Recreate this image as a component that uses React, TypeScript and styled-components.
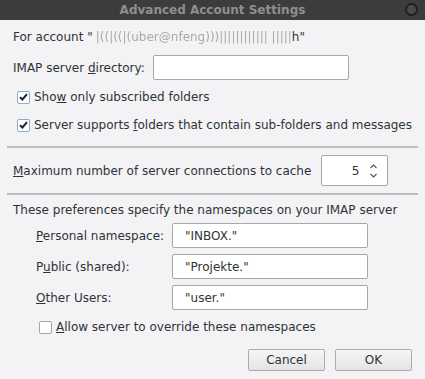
import React from "react";
import styled, { createGlobalStyle } from "styled-components";

const GlobalStyle = createGlobalStyle`
  html, body {
    margin: 0;
    padding: 0;
    background: #f3f3f5;
  }
  body {
    font-family: "DejaVu Sans", "Liberation Sans", sans-serif;
    font-size: 12px;
    color: #2e3436;
  }
`;

const Window = styled.div`
  width: 425px;
  height: 379px;
  display: flex;
  flex-direction: column;
  background: #f3f3f5;
  overflow: hidden;
`;

const TitleBar = styled.div`
  position: relative;
  height: 20px;
  flex-shrink: 0;
  display: flex;
  align-items: center;
  justify-content: center;
  background: #3c3c3c;
  color: #8f8f8f;
  font-weight: bold;
  font-size: 12px;
`;

const CloseDot = styled.div`
  position: absolute;
  right: 7px;
  top: 3px;
  width: 9px;
  height: 9px;
  border: 2px solid #1f1f1f;
  border-radius: 50%;
  background: #4a4a4a;
`;

const Body = styled.div`
  display: flex;
  flex-direction: column;
  padding: 4px 13px 0 13px;
`;

const Row = styled.div<{ $h: number; $mt?: number; $indent?: number }>`
  display: flex;
  align-items: center;
  height: ${(p) => p.$h}px;
  margin-top: ${(p) => p.$mt ?? 0}px;
  padding-left: ${(p) => p.$indent ?? 0}px;
  white-space: nowrap;
`;

const Blurred = styled.span`
  margin-left: 3px;
  color: #a9a9a9;
  filter: blur(0.5px);
`;

const U = styled.span`
  text-decoration: underline;
`;

const Label = styled.span<{ $w?: number }>`
  display: inline-block;
  width: ${(p) => (p.$w ? `${p.$w}px` : "auto")};
`;

const TextBox = styled.div<{ $w: number }>`
  box-sizing: border-box;
  width: ${(p) => p.$w}px;
  height: 25px;
  background: #fff;
  border: 1px solid #a7a7a7;
  border-radius: 2px;
  display: flex;
  align-items: center;
  padding-left: 12px;
`;

const CheckBox = styled.span<{ $checked?: boolean }>`
  box-sizing: border-box;
  width: 13px;
  height: 13px;
  margin: 0 4px 0 4px;
  border: 1px solid ${(p) => (p.$checked ? "#8fa7d3" : "#a5a5a5")};
  border-radius: 2px;
  background: #fff;
  display: inline-flex;
  align-items: center;
  justify-content: center;
`;

const Separator = styled.div<{ $mt: number }>`
  height: 2px;
  margin: ${(p) => p.$mt}px -6px 0 -6px;
  background: #bdbdbd;
`;

const Spin = styled.div`
  box-sizing: border-box;
  margin-left: 10px;
  width: 67px;
  height: 31px;
  background: #fff;
  border: 1px solid #a7a7a7;
  border-radius: 2px;
  display: flex;
  align-items: center;
  justify-content: flex-end;
  padding-right: 10px;
  gap: 11px;
`;

const Arrows = styled.div`
  display: flex;
  flex-direction: column;
  gap: 4px;
`;

const ButtonRow = styled.div`
  display: flex;
  justify-content: flex-end;
  gap: 10px;
  margin-top: 12px;
`;

const Button = styled.div`
  box-sizing: border-box;
  width: 77px;
  height: 22px;
  display: flex;
  align-items: center;
  justify-content: center;
  border: 1px solid #acacac;
  border-radius: 2px;
  background: linear-gradient(#f6f6f6, #e4e4e4);
  color: #2e3436;
`;

const Check = () => (
  <svg width="9" height="8" viewBox="0 0 9 8">
    <path d="M1 4.2 L3.4 6.5 L8 1.2" fill="none" stroke="#222" strokeWidth="2" />
  </svg>
);

const Chevron = ({ up }: { up?: boolean }) => (
  <svg width="7" height="5" viewBox="0 0 7 5">
    <path
      d={up ? "M0.5 4 L3.5 1 L6.5 4" : "M0.5 1 L3.5 4 L6.5 1"}
      fill="none"
      stroke="#555"
      strokeWidth="1.1"
    />
  </svg>
);

const namespaces = [
  { label: <><U>P</U>ersonal namespace:</>, value: "\"INBOX.\"" },
  { label: <>P<U>u</U>blic (shared):</>, value: "\"Projekte.\"" },
  { label: <><U>O</U>ther Users:</>, value: "\"user.\"" },
];

export default function App() {
  return (
    <Window>
      <GlobalStyle />
      <TitleBar>
        Advanced Account Settings
        <CloseDot />
      </TitleBar>
      <Body>
        <Row $h={26}>
          <Label>
            For account "<Blurred>|((|((|(uber@nfeng)))|||||||||||| |||||</Blurred>h"
          </Label>
        </Row>
        <Row $h={25} $mt={5}>
          <Label $w={140}>
            IMAP server <U>d</U>irectory:
          </Label>
          <TextBox $w={196} />
        </Row>
        <Row $h={28} $mt={3}>
          <CheckBox $checked>
            <Check />
          </CheckBox>
          <Label>
            Sho<U>w</U> only subscribed folders
          </Label>
        </Row>
        <Row $h={28}>
          <CheckBox $checked>
            <Check />
          </CheckBox>
          <Label>
            Server supports <U>f</U>olders that contain sub-folders and messages
          </Label>
        </Row>
        <Separator $mt={7} />
        <Row $h={31} $mt={7}>
          <Label>
            <U>M</U>aximum number of server connections to cache
          </Label>
          <Spin>
            5
            <Arrows>
              <Chevron up />
              <Chevron />
            </Arrows>
          </Spin>
        </Row>
        <Separator $mt={7} />
        <Row $h={20} $mt={5}>
          These preferences specify the namespaces on your IMAP server
        </Row>
        {namespaces.map((n, i) => (
          <Row key={i} $h={25} $mt={i === 0 ? 3 : 6} $indent={23}>
            <Label $w={136}>{n.label}</Label>
            <TextBox $w={196}>{n.value}</TextBox>
          </Row>
        ))}
        <Row $h={20} $mt={7} $indent={22}>
          <CheckBox />
          <Label>
            <U>A</U>llow server to override these namespaces
          </Label>
        </Row>
        <ButtonRow>
          <Button>Cancel</Button>
          <Button>OK</Button>
        </ButtonRow>
      </Body>
    </Window>
  );
}
